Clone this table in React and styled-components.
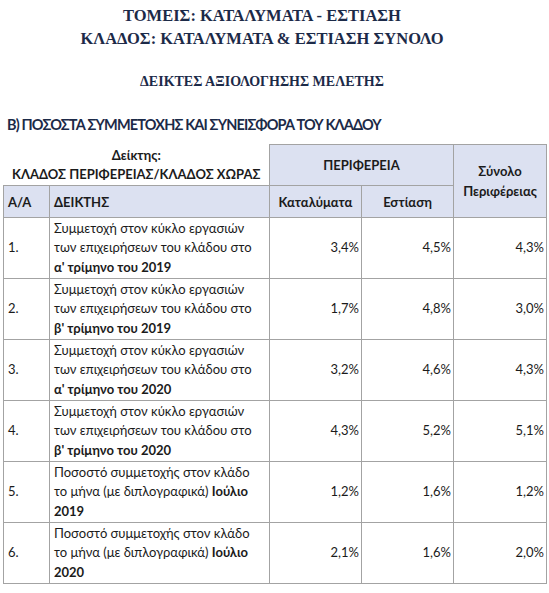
import React from 'react';
import styled, { createGlobalStyle } from 'styled-components';

const GlobalStyle = createGlobalStyle`
  html, body {
    margin: 0;
    padding: 0;
    background: #ffffff;
  }
  body {
    font-family: Lato, "Open Sans", "Noto Sans", sans-serif;
    color: #1b1b1b;
  }
`;

const rows = [
  { n: '1.', text: 'Συμμετοχή στον κύκλο εργασιών των επιχειρήσεων του κλάδου στο', bold: "α' τρίμηνο του 2019", values: ['3,4%', '4,5%', '4,3%'] },
  { n: '2.', text: 'Συμμετοχή στον κύκλο εργασιών των επιχειρήσεων του κλάδου στο', bold: "β' τρίμηνο του 2019", values: ['1,7%', '4,8%', '3,0%'] },
  { n: '3.', text: 'Συμμετοχή στον κύκλο εργασιών των επιχειρήσεων του κλάδου στο', bold: "α' τρίμηνο του 2020", values: ['3,2%', '4,6%', '4,3%'] },
  { n: '4.', text: 'Συμμετοχή στον κύκλο εργασιών των επιχειρήσεων του κλάδου στο', bold: "β' τρίμηνο του 2020", values: ['4,3%', '5,2%', '5,1%'] },
  { n: '5.', text: 'Ποσοστό συμμετοχής στον κλάδο το μήνα (με διπλογραφικά)', bold: 'Ιούλιο 2019', values: ['1,2%', '1,6%', '1,2%'] },
  { n: '6.', text: 'Ποσοστό συμμετοχής στον κλάδο το μήνα (με διπλογραφικά)', bold: 'Ιούλιο 2020', values: ['2,1%', '1,6%', '2,0%'] },
];

const App = () => {
  return (
    <Page>
      <GlobalStyle />
      <Heading>
        <Title>ΤΟΜΕΙΣ: ΚΑΤΑΛΥΜΑΤΑ - ΕΣΤΙΑΣΗ</Title>
        <Title>ΚΛΑΔΟΣ: ΚΑΤΑΛΥΜΑΤΑ &amp; ΕΣΤΙΑΣΗ ΣΥΝΟΛΟ</Title>
        <Subtitle>ΔΕΙΚΤΕΣ ΑΞΙΟΛΟΓΗΣΗΣ ΜΕΛΕΤΗΣ</Subtitle>
      </Heading>
      <Section>Β) ΠΟΣΟΣΤΑ ΣΥΜΜΕΤΟΧΗΣ ΚΑΙ ΣΥΝΕΙΣΦΟΡΑ ΤΟΥ ΚΛΑΔΟΥ</Section>
      <Table>
        <colgroup>
          <col style={{ width: 46 }} />
          <col style={{ width: 220 }} />
          <col style={{ width: 92 }} />
          <col style={{ width: 92 }} />
          <col style={{ width: 93 }} />
        </colgroup>
        <thead>
          <HeadRow $h={41}>
            <Caption colSpan={2}>
              Δείκτης:
              <br />
              ΚΛΑΔΟΣ ΠΕΡΙΦΕΡΕΙΑΣ/ΚΛΑΔΟΣ ΧΩΡΑΣ
            </Caption>
            <Head colSpan={2}>ΠΕΡΙΦΕΡΕΙΑ</Head>
            <Head rowSpan={2}>
              Σύνολο
              <br />
              Περιφέρειας
            </Head>
          </HeadRow>
          <HeadRow $h={32}>
            <Head $left>Α/Α</Head>
            <Head $left>ΔΕΙΚΤΗΣ</Head>
            <Head>Καταλύματα</Head>
            <Head>Εστίαση</Head>
          </HeadRow>
        </thead>
        <tbody>
          {rows.map((r) => (
            <Row key={r.n}>
              <Cell>{r.n}</Cell>
              <Cell>
                {r.text} <b>{r.bold}</b>
              </Cell>
              {r.values.map((v, i) => (
                <Num key={i}>{v}</Num>
              ))}
            </Row>
          ))}
        </tbody>
      </Table>
    </Page>
  );
};

const Page = styled.div`
  width: 549px;
  padding: 4px 0 0 3px;
  box-sizing: border-box;
`;

const Heading = styled.div`
  width: 518px;
  display: flex;
  flex-direction: column;
  align-items: center;
  font-family: "Liberation Serif", "DejaVu Serif", serif;
  font-weight: bold;
  color: #1c2a48;
`;

const Title = styled.div`
  font-size: 16.5px;
  line-height: 23px;
`;

const Subtitle = styled.div`
  font-size: 14px;
  line-height: 18px;
  margin-top: 23px;
`;

const Section = styled.div`
  margin: 25px 0 0 4px;
  font-size: 14.5px;
  letter-spacing: -0.85px;
  font-weight: bold;
  color: #1c2a48;
  line-height: 18px;
`;

const Table = styled.table`
  margin-top: 10px;
  border-collapse: collapse;
  table-layout: fixed;
  width: 543px;
  font-size: 13px;
  color: #1b1b1b;
`;

const HeadRow = styled.tr`
  height: ${(p) => p.$h}px;
`;

const Caption = styled.th`
  padding: 0;
  font-weight: bold;
  text-align: center;
  line-height: 19px;
  vertical-align: middle;
  border-right: 1px solid #a3a3a3;
`;

const Head = styled.th`
  background: #dce1f1;
  border: 1px solid #a3a3a3;
  font-weight: bold;
  text-align: ${(p) => (p.$left ? 'left' : 'center')};
  padding: 0 4px;
  line-height: 20px;
`;

const Row = styled.tr`
  height: 61px;
`;

const Cell = styled.td`
  border: 1px solid #a3a3a3;
  padding: 0 4px;
  line-height: 19.5px;
  vertical-align: middle;

  b {
    font-weight: bold;
  }
`;

const Num = styled(Cell)`
  text-align: right;
  padding: 0 2px 0 0;
`;

export default App;
